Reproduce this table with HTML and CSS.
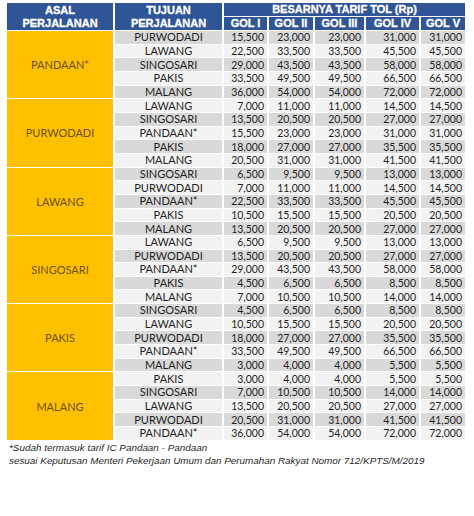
FILE: index.html
```html
<!DOCTYPE html>
<html lang="id">
<head>
<meta charset="utf-8">
<title>Tarif Tol</title>
<link rel="stylesheet" href="styles.css">
</head>
<body>
<div class="page">
  <div class="tbl">
    <div class="hd asal">ASAL<br>PERJALANAN</div>
    <div class="hd tujuan">TUJUAN<br>PERJALANAN</div>
    <div class="hd besar">BESARNYA TARIF TOL (Rp)</div>
    <div class="hd gol">GOL I</div>
    <div class="hd gol">GOL II</div>
    <div class="hd gol">GOL III</div>
    <div class="hd gol">GOL IV</div>
    <div class="hd gol">GOL V</div>

    <div class="origin">PANDAAN*</div>
    <div class="c d dest">PURWODADI</div><div class="c d n">15,500</div><div class="c d n">23,000</div><div class="c d n">23,000</div><div class="c d n">31,000</div><div class="c d n">31,000</div>
    <div class="c l dest">LAWANG</div><div class="c l n">22,500</div><div class="c l n">33,500</div><div class="c l n">33,500</div><div class="c l n">45,500</div><div class="c l n">45,500</div>
    <div class="c d dest">SINGOSARI</div><div class="c d n">29,000</div><div class="c d n">43,500</div><div class="c d n">43,500</div><div class="c d n">58,000</div><div class="c d n">58,000</div>
    <div class="c l dest">PAKIS</div><div class="c l n">33,500</div><div class="c l n">49,500</div><div class="c l n">49,500</div><div class="c l n">66,500</div><div class="c l n">66,500</div>
    <div class="c d dest">MALANG</div><div class="c d n">36,000</div><div class="c d n">54,000</div><div class="c d n">54,000</div><div class="c d n">72,000</div><div class="c d n">72,000</div>

    <div class="origin">PURWODADI</div>
    <div class="c l dest">LAWANG</div><div class="c l n">7,000</div><div class="c l n">11,000</div><div class="c l n">11,000</div><div class="c l n">14,500</div><div class="c l n">14,500</div>
    <div class="c d dest">SINGOSARI</div><div class="c d n">13,500</div><div class="c d n">20,500</div><div class="c d n">20,500</div><div class="c d n">27,000</div><div class="c d n">27,000</div>
    <div class="c l dest">PANDAAN*</div><div class="c l n">15,500</div><div class="c l n">23,000</div><div class="c l n">23,000</div><div class="c l n">31,000</div><div class="c l n">31,000</div>
    <div class="c d dest">PAKIS</div><div class="c d n">18,000</div><div class="c d n">27,000</div><div class="c d n">27,000</div><div class="c d n">35,500</div><div class="c d n">35,500</div>
    <div class="c l dest">MALANG</div><div class="c l n">20,500</div><div class="c l n">31,000</div><div class="c l n">31,000</div><div class="c l n">41,500</div><div class="c l n">41,500</div>

    <div class="origin">LAWANG</div>
    <div class="c d dest">SINGOSARI</div><div class="c d n">6,500</div><div class="c d n">9,500</div><div class="c d n">9,500</div><div class="c d n">13,000</div><div class="c d n">13,000</div>
    <div class="c l dest">PURWODADI</div><div class="c l n">7,000</div><div class="c l n">11,000</div><div class="c l n">11,000</div><div class="c l n">14,500</div><div class="c l n">14,500</div>
    <div class="c d dest">PANDAAN*</div><div class="c d n">22,500</div><div class="c d n">33,500</div><div class="c d n">33,500</div><div class="c d n">45,500</div><div class="c d n">45,500</div>
    <div class="c l dest">PAKIS</div><div class="c l n">10,500</div><div class="c l n">15,500</div><div class="c l n">15,500</div><div class="c l n">20,500</div><div class="c l n">20,500</div>
    <div class="c d dest">MALANG</div><div class="c d n">13,500</div><div class="c d n">20,500</div><div class="c d n">20,500</div><div class="c d n">27,000</div><div class="c d n">27,000</div>

    <div class="origin">SINGOSARI</div>
    <div class="c l dest">LAWANG</div><div class="c l n">6,500</div><div class="c l n">9,500</div><div class="c l n">9,500</div><div class="c l n">13,000</div><div class="c l n">13,000</div>
    <div class="c d dest">PURWODADI</div><div class="c d n">13,500</div><div class="c d n">20,500</div><div class="c d n">20,500</div><div class="c d n">27,000</div><div class="c d n">27,000</div>
    <div class="c l dest">PANDAAN*</div><div class="c l n">29,000</div><div class="c l n">43,500</div><div class="c l n">43,500</div><div class="c l n">58,000</div><div class="c l n">58,000</div>
    <div class="c d dest">PAKIS</div><div class="c d n">4,500</div><div class="c d n">6,500</div><div class="c d n">6,500</div><div class="c d n">8,500</div><div class="c d n">8,500</div>
    <div class="c l dest">MALANG</div><div class="c l n">7,000</div><div class="c l n">10,500</div><div class="c l n">10,500</div><div class="c l n">14,000</div><div class="c l n">14,000</div>

    <div class="origin">PAKIS</div>
    <div class="c d dest">SINGOSARI</div><div class="c d n">4,500</div><div class="c d n">6,500</div><div class="c d n">6,500</div><div class="c d n">8,500</div><div class="c d n">8,500</div>
    <div class="c l dest">LAWANG</div><div class="c l n">10,500</div><div class="c l n">15,500</div><div class="c l n">15,500</div><div class="c l n">20,500</div><div class="c l n">20,500</div>
    <div class="c d dest">PURWODADI</div><div class="c d n">18,000</div><div class="c d n">27,000</div><div class="c d n">27,000</div><div class="c d n">35,500</div><div class="c d n">35,500</div>
    <div class="c l dest">PANDAAN*</div><div class="c l n">33,500</div><div class="c l n">49,500</div><div class="c l n">49,500</div><div class="c l n">66,500</div><div class="c l n">66,500</div>
    <div class="c d dest">MALANG</div><div class="c d n">3,000</div><div class="c d n">4,000</div><div class="c d n">4,000</div><div class="c d n">5,500</div><div class="c d n">5,500</div>

    <div class="origin">MALANG</div>
    <div class="c l dest">PAKIS</div><div class="c l n">3,000</div><div class="c l n">4,000</div><div class="c l n">4,000</div><div class="c l n">5,500</div><div class="c l n">5,500</div>
    <div class="c d dest">SINGOSARI</div><div class="c d n">7,000</div><div class="c d n">10,500</div><div class="c d n">10,500</div><div class="c d n">14,000</div><div class="c d n">14,000</div>
    <div class="c l dest">LAWANG</div><div class="c l n">13,500</div><div class="c l n">20,500</div><div class="c l n">20,500</div><div class="c l n">27,000</div><div class="c l n">27,000</div>
    <div class="c d dest">PURWODADI</div><div class="c d n">20,500</div><div class="c d n">31,000</div><div class="c d n">31,000</div><div class="c d n">41,500</div><div class="c d n">41,500</div>
    <div class="c l dest">PANDAAN*</div><div class="c l n">36,000</div><div class="c l n">54,000</div><div class="c l n">54,000</div><div class="c l n">72,000</div><div class="c l n">72,000</div>
  </div>
  <div class="note">
    <p>*Sudah termasuk tarif IC Pandaan - Pandaan</p>
    <p>sesuai Keputusan Menteri Pekerjaan Umum dan Perumahan Rakyat Nomor 712/KPTS/M/2019</p>
  </div>
</div>
</body>
</html>
```
FILE: styles.css
```css
html, body {
  margin: 0;
  padding: 0;
  background: #ffffff;
}
.page {
  padding: 3px 0 0 7px;
}
.tbl {
  display: grid;
  grid-template-columns: 106px 107px 43px 44px 49px 53px 44px;
  grid-template-rows: 13px 13px repeat(30, 12.67px);
  column-gap: 2px;
  row-gap: 1px;
  width: 458px;
  font-family: Lato, "Liberation Sans", sans-serif;
  font-size: 10.5px;
  color: #1f1f1f;
}
.hd {
  background: #2f5597;
  color: #ffffff;
  font-family: "Liberation Sans", Arial, sans-serif;
  font-weight: bold;
  font-size: 11px;
  -webkit-text-stroke: 0.3px #ffffff;
  display: flex;
  align-items: center;
  justify-content: center;
  text-align: center;
  line-height: 13px;
}
.asal, .tujuan {
  grid-row: span 2;
}
.besar {
  grid-column: span 5;
}
.origin {
  grid-row: span 5;
  grid-column: 1;
  background: #ffc000;
  color: #6b5000;
  font-size: 11px;
  display: flex;
  align-items: center;
  justify-content: center;
}
.c {
  display: flex;
  align-items: center;
  line-height: 12px;
  white-space: nowrap;
}
.d { background: #d9d9d9; }
.l { background: #f2f2f2; }
.dest { justify-content: center; font-size: 11px; }
.n { justify-content: flex-end; padding-right: 3px; }
.note {
  margin-top: 1px;
  padding-left: 2px;
  font-family: "Liberation Sans", Arial, sans-serif;
  font-style: italic;
  font-size: 9.9px;
  line-height: 13px;
  color: #1f1f1f;
}
.note p {
  margin: 0;
}
```
